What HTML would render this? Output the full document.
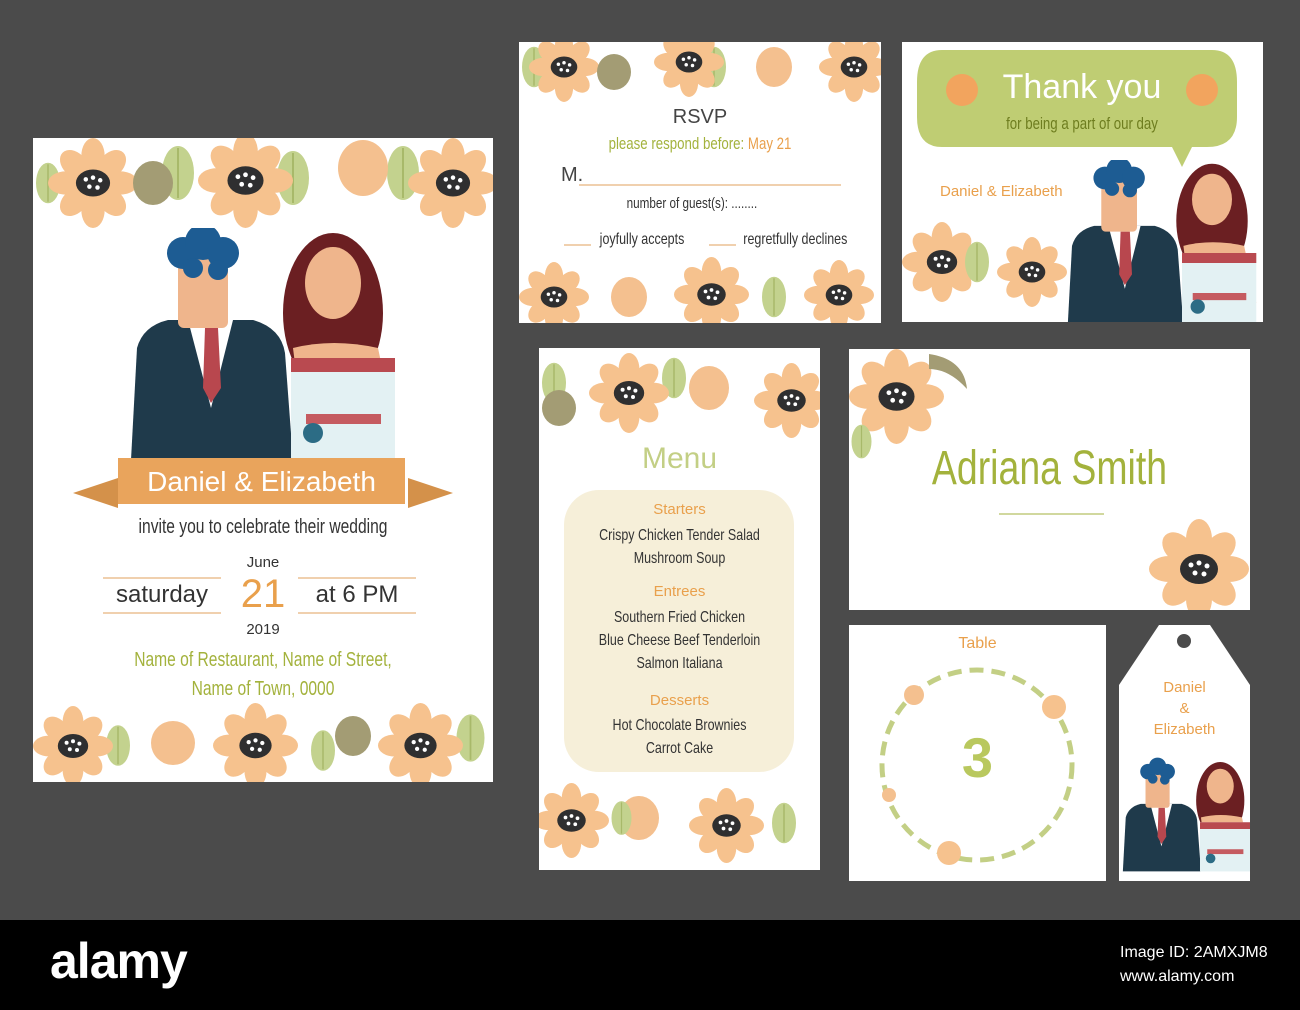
<!DOCTYPE html>
<html><head><meta charset="utf-8"><style>
body{margin:0;width:1300px;height:1010px;background:#4b4b4b;position:relative;overflow:hidden;font-family:"Liberation Sans",sans-serif}
.c{position:absolute;background:#fff}
.t{position:absolute;white-space:nowrap;text-align:center}
.n{transform:scaleX(0.78);transform-origin:center}
</style></head><body>
<svg width="0" height="0" style="position:absolute">
<defs>
<symbol id="fl" viewBox="-50 -50 100 100">
<g fill="#f6c28e">
<ellipse cx="0" cy="-30" rx="13" ry="20"/><ellipse cx="0" cy="30" rx="13" ry="20"/>
<ellipse cx="-30" cy="0" rx="20" ry="13"/><ellipse cx="30" cy="0" rx="20" ry="13"/>
<ellipse cx="-21" cy="-21" rx="13" ry="18" transform="rotate(-45 -21 -21)"/><ellipse cx="21" cy="21" rx="13" ry="18" transform="rotate(-45 21 21)"/>
<ellipse cx="21" cy="-21" rx="13" ry="18" transform="rotate(45 21 -21)"/><ellipse cx="-21" cy="21" rx="13" ry="18" transform="rotate(45 -21 21)"/>
</g>
<ellipse cx="0" cy="0" rx="19" ry="15" fill="#2f2f30"/>
<g fill="#fff"><circle cx="-8" cy="-4" r="2.5"/><circle cx="0" cy="-6" r="2.5"/><circle cx="8" cy="-3" r="2.5"/><circle cx="-4" cy="4" r="2.5"/><circle cx="5" cy="5" r="2.5"/></g>
</symbol>
<symbol id="lf" viewBox="-20 -30 40 60"><ellipse cx="0" cy="0" rx="16" ry="27" fill="#c3d28e"/><line x1="0" y1="-25" x2="0" y2="25" stroke="#a8b96a" stroke-width="2"/></symbol>
<symbol id="cp" viewBox="0 0 280 232">
<path d="M8 232 L14 120 Q20 98 45 92 L130 92 Q158 100 162 125 L170 232Z" fill="#1f3a4b"/>
<path d="M65 92 L88 180 L110 92Z" fill="#fff"/>
<path d="M82 100 L95 100 L98 160 L88 175 L80 160Z" fill="#b8474e"/>
<rect x="55" y="20" width="50" height="80" rx="6" fill="#efb58c"/>
<g fill="#1d5c93"><circle cx="60" cy="25" r="16"/><circle cx="80" cy="14" r="18"/><circle cx="100" cy="25" r="16"/><circle cx="70" cy="40" r="10"/><circle cx="95" cy="42" r="10"/></g>
<ellipse cx="210" cy="85" rx="50" ry="80" fill="#6b1f22"/>
<path d="M170 120 Q210 110 255 120 L272 200 L180 200Z" fill="#efb58c"/>
<ellipse cx="210" cy="55" rx="28" ry="36" fill="#efb58c"/>
<rect x="168" y="130" width="104" height="102" fill="#e3f1f3"/>
<rect x="168" y="130" width="104" height="14" fill="#b94a50"/>
<rect x="183" y="186" width="75" height="10" fill="#c55b60"/>
<circle cx="190" cy="205" r="10" fill="#2c6c85"/>
</symbol>
</defs></svg>

<!-- main invite -->
<div class="c" style="left:33px;top:138px;width:460px;height:644px">
<svg width="460" height="644" style="position:absolute;left:0;top:0">
<use href="#lf" x="125" y="5" width="40" height="60"/><use href="#lf" x="240" y="10" width="40" height="60"/><use href="#lf" x="350" y="5" width="40" height="60"/><use href="#lf" x="0" y="20" width="30" height="50"/>
<use href="#fl" x="15" y="0" width="90" height="90"/><use href="#fl" x="165" y="-5" width="95" height="95"/><use href="#fl" x="375" y="0" width="90" height="90"/>
<ellipse cx="120" cy="45" rx="20" ry="22" fill="#a39c74"/><ellipse cx="330" cy="30" rx="25" ry="28" fill="#f4c08f"/>
<use href="#cp" x="90" y="90" width="280" height="232"/>
<path d="M40 355 L85 340 L85 370Z M420 355 L375 340 L375 370Z" fill="#d4914a"/>
<rect x="85" y="320" width="287" height="46" fill="#e9a45c"/>
<use href="#lf" x="70" y="580" width="30" height="55"/><use href="#lf" x="275" y="585" width="30" height="55"/><use href="#lf" x="420" y="570" width="35" height="60"/>
<use href="#fl" x="0" y="568" width="80" height="80"/><use href="#fl" x="180" y="565" width="85" height="85"/><use href="#fl" x="345" y="565" width="85" height="85"/>
<ellipse cx="140" cy="605" rx="22" ry="22" fill="#f4c08f"/><ellipse cx="320" cy="598" rx="18" ry="20" fill="#a39c74"/>
<line x1="70" y1="440" x2="188" y2="440" stroke="#e0a25e"/><line x1="70" y1="475" x2="188" y2="475" stroke="#e0a25e"/>
<line x1="265" y1="440" x2="383" y2="440" stroke="#e0a25e"/><line x1="265" y1="475" x2="383" y2="475" stroke="#e0a25e"/>
</svg>
<div class="t" style="left:85px;top:328px;width:287px;font-size:28px;color:#fff">Daniel &amp; Elizabeth</div>
<div class="t n" style="left:0;top:378px;width:460px;font-size:20px;color:#333">invite you to celebrate their wedding</div>
<div class="t" style="left:200px;top:416px;width:60px;font-size:15px;color:#333">June</div>
<div class="t" style="left:70px;top:443px;width:118px;font-size:24px;color:#333">saturday</div>
<div class="t" style="left:200px;top:434px;width:60px;font-size:40px;color:#e9a04c">21</div>
<div class="t" style="left:265px;top:443px;width:118px;font-size:24px;color:#333">at 6 PM</div>
<div class="t" style="left:200px;top:483px;width:60px;font-size:15px;color:#333">2019</div>
<div class="t n" style="left:0;top:511px;width:460px;font-size:20px;color:#a3b23c">Name of Restaurant, Name of Street,</div>
<div class="t n" style="left:0;top:540px;width:460px;font-size:20px;color:#a3b23c">Name of Town, 0000</div>
</div>

<!-- RSVP -->
<div class="c" style="left:519px;top:42px;width:362px;height:281px">
<svg width="362" height="281" style="position:absolute">
<use href="#lf" x="0" y="0" width="30" height="50"/><use href="#lf" x="180" y="0" width="30" height="50"/>
<use href="#fl" x="10" y="-10" width="70" height="70"/><use href="#fl" x="135" y="-15" width="70" height="70"/><use href="#fl" x="300" y="-10" width="70" height="70"/>
<ellipse cx="95" cy="30" rx="17" ry="18" fill="#a39c74"/><ellipse cx="255" cy="25" rx="18" ry="20" fill="#f4c08f"/>
<use href="#fl" x="0" y="220" width="70" height="70"/><use href="#fl" x="155" y="215" width="75" height="75"/><use href="#fl" x="285" y="218" width="70" height="70"/>
<ellipse cx="110" cy="255" rx="18" ry="20" fill="#f4c08f"/><use href="#lf" x="240" y="230" width="30" height="50"/>
<line x1="60" y1="143" x2="322" y2="143" stroke="#e0a25e"/>
<line x1="45" y1="203" x2="72" y2="203" stroke="#e0a25e"/><line x1="190" y1="203" x2="217" y2="203" stroke="#e0a25e"/>
</svg>
<div class="t" style="left:0;top:64px;width:362px;font-size:20px;color:#444">RSVP</div>
<div class="t n" style="left:0;top:92px;width:362px;font-size:17px;color:#a3b23c">please respond before: <span style="color:#e9a04c">May 21</span></div>
<div class="t" style="left:42px;top:122px;font-size:20px;color:#444">M.</div>
<div class="t n" style="left:90px;top:153px;width:160px;font-size:15px;color:#333">number of guest(s): ........</div>
<div class="t n" style="left:68px;top:189px;width:110px;font-size:16px;color:#333">joyfully accepts</div>
<div class="t n" style="left:210px;top:189px;width:130px;font-size:16px;color:#333">regretfully declines</div>
</div>

<!-- Thank you -->
<div class="c" style="left:902px;top:42px;width:361px;height:280px">
<svg width="361" height="280" style="position:absolute">
<path d="M40 8 L310 8 Q335 8 335 40 L335 75 Q335 105 305 105 L290 105 L280 125 L270 105 L40 105 Q15 105 15 75 L15 40 Q15 8 40 8Z" fill="#bfcd73"/>
<circle cx="60" cy="48" r="16" fill="#f2a45e"/><circle cx="300" cy="48" r="16" fill="#f2a45e"/>
<use href="#fl" x="0" y="180" width="80" height="80"/><use href="#fl" x="95" y="195" width="70" height="70"/>
<use href="#lf" x="60" y="190" width="30" height="60"/>
<use href="#cp" x="160" y="118" width="200" height="166"/>
</svg>
<div class="t" style="left:60px;top:26px;width:240px;font-size:34px;color:#fff">Thank you</div>
<div class="t n" style="left:60px;top:72px;width:240px;font-size:17px;color:#6e7d1f">for being a part of our day</div>
<div class="t" style="left:38px;top:141px;font-size:15px;color:#e9a04c">Daniel &amp; Elizabeth</div>
</div>

<!-- Menu -->
<div class="c" style="left:539px;top:348px;width:281px;height:522px">
<svg width="281" height="522" style="position:absolute">
<use href="#lf" x="0" y="10" width="30" height="50"/><use href="#lf" x="120" y="0" width="30" height="60"/>
<use href="#fl" x="50" y="5" width="80" height="80"/><use href="#fl" x="215" y="15" width="75" height="75"/>
<ellipse cx="20" cy="60" rx="17" ry="18" fill="#a39c74"/><ellipse cx="170" cy="40" rx="20" ry="22" fill="#f4c08f"/>
<rect x="25" y="142" width="230" height="282" rx="35" fill="#f6efd9"/>
<use href="#fl" x="-5" y="435" width="75" height="75"/><use href="#fl" x="150" y="440" width="75" height="75"/>
<ellipse cx="100" cy="470" rx="20" ry="22" fill="#f4c08f"/><use href="#lf" x="230" y="445" width="30" height="60"/><use href="#lf" x="70" y="445" width="25" height="50"/>
</svg>
<div class="t" style="left:0;top:94px;width:281px;font-size:30px;color:#c3cf85">Menu</div>
<div class="t" style="left:0;top:153px;width:281px;font-size:15px;color:#e9a04c">Starters</div>
<div class="t n" style="left:0;top:176px;width:281px;font-size:16px;line-height:23px;color:#333">Crispy Chicken Tender Salad<br>Mushroom Soup</div>
<div class="t" style="left:0;top:235px;width:281px;font-size:15px;color:#e9a04c">Entrees</div>
<div class="t n" style="left:0;top:258px;width:281px;font-size:16px;line-height:23px;color:#333">Southern Fried Chicken<br>Blue Cheese Beef Tenderloin<br>Salmon Italiana</div>
<div class="t" style="left:0;top:344px;width:281px;font-size:15px;color:#e9a04c">Desserts</div>
<div class="t n" style="left:0;top:366px;width:281px;font-size:16px;line-height:23px;color:#333">Hot Chocolate Brownies<br>Carrot Cake</div>
</div>

<!-- Place card -->
<div class="c" style="left:849px;top:349px;width:401px;height:261px">
<svg width="401" height="261" style="position:absolute">
<use href="#fl" x="0" y="0" width="95" height="95"/><path d="M80 5 Q115 10 118 40 Q100 20 80 20Z" fill="#a39c74"/>
<use href="#lf" x="0" y="70" width="25" height="45"/>
<use href="#fl" x="300" y="170" width="100" height="100"/>
<line x1="150" y1="165" x2="255" y2="165" stroke="#a3b23c"/>
</svg>
<div class="t n" style="left:0;top:92px;width:401px;font-size:48px;color:#a3b23c">Adriana Smith</div>
</div>

<!-- Table -->
<div class="c" style="left:849px;top:625px;width:257px;height:256px">
<svg width="257" height="256" style="position:absolute">
<circle cx="128" cy="140" r="95" fill="none" stroke="#c3cf85" stroke-width="5" stroke-dasharray="14 8"/>
<circle cx="65" cy="70" r="10" fill="#f4c08f"/><circle cx="205" cy="82" r="12" fill="#f6c28e"/><circle cx="100" cy="228" r="12" fill="#f6c28e"/><circle cx="40" cy="170" r="7" fill="#f4c08f"/>
</svg>
<div class="t" style="left:0;top:10px;width:257px;font-size:16px;color:#e9a04c">Table</div>
<div class="t" style="left:0;top:100px;width:257px;font-size:56px;font-weight:bold;color:#b9c85e">3</div>
</div>

<!-- Tag -->
<svg width="131" height="256" style="position:absolute;left:1119px;top:625px">
<path d="M0 60 L40 0 L91 0 L131 60 L131 256 L0 256Z" fill="#fff"/>
<circle cx="65" cy="16" r="7" fill="#4b4b4b"/>
<use href="#cp" x="0" y="125" width="135" height="131"/>
</svg>
<div class="t" style="left:1119px;top:677px;width:131px;font-size:15px;line-height:21px;color:#e9a04c">Daniel<br>&amp;<br>Elizabeth</div>

<!-- alamy bar -->
<div style="position:absolute;left:0;top:920px;width:1300px;height:90px;background:#000"></div>
<div class="t" style="left:50px;top:932px;font-size:50px;color:#fff;font-weight:bold;letter-spacing:-1px">alamy</div>
<div class="t" style="left:1120px;top:944px;font-size:16px;color:#fff;text-align:right">Image ID: 2AMXJM8</div>
<div class="t" style="left:1120px;top:968px;font-size:16px;color:#fff;text-align:right">www.alamy.com</div>
</body></html>
